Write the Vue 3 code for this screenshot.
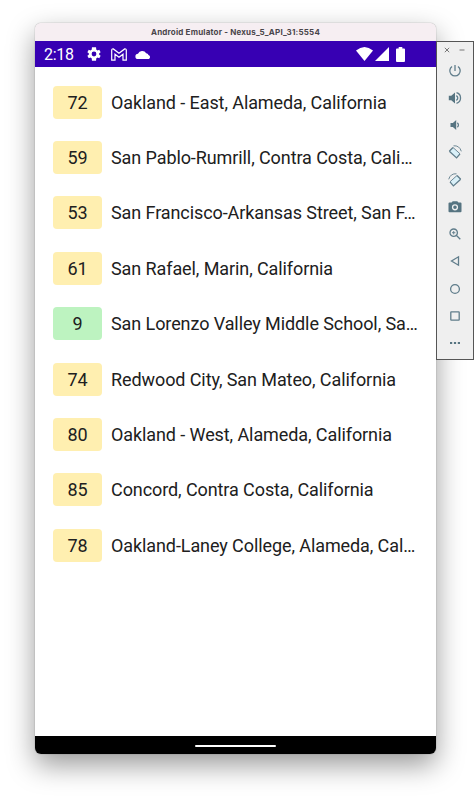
<template>
  <div class="desktop">
    <div class="window">
      <div class="title-bar">Android Emulator - Nexus_5_API_31:5554</div>

      <div class="status-bar">
        <span class="time">2:18</span>
        <svg class="gear" viewBox="2 2 20 20" fill="#fff">
          <path
            fill-rule="evenodd"
            d="M19.4 13a7.500 7.500 0 0 0 0-2l2.100-1.600-2-3.500-2.500 1a7.500 7.500 0 0 0-1.700-1L14.900 2.500H9.100l-.4 3.400a7.500 7.500 0 0 0-1.700 1l-2.500-1-2 3.500L4.600 11a7.500 7.500 0 0 0 0 2l-2.100 1.600 2 3.500 2.500-1a7.500 7.500 0 0 0 1.700 1l.4 3.400h5.800l.4-3.400a7.500 7.500 0 0 0 1.700-1l2.500 1 2-3.500zM12 15.400a3.400 3.400 0 1 1 0-6.800 3.400 3.400 0 0 1 0 6.800z"
          />
        </svg>
        <svg class="mail" viewBox="0 0 16 13" fill="none" stroke="#fff" stroke-width="1.200">
          <path d="M.7 2.200Q.7.700 2.300.9L8 5.200 13.700.9Q15.300.7 15.300 2.200V12.200H12V6.200L8 9.200 4 6.200V12.200H.7z" />
        </svg>
        <svg class="cloud" viewBox="0 0 16 9" fill="#fff">
          <path d="M3 9a2.600 2.600 0 0 1 0-5.200A4.600 4.600 0 0 1 11.200 3.200 3.200 3.200 0 0 1 13.500 5 2.100 2.100 0 0 1 13.700 9z" />
        </svg>
        <span class="spacer"></span>
        <svg class="wifi" viewBox="0 0 17 14" fill="#fff">
          <path d="M0 3.600Q8.500-3.400 17 3.600L8.500 14z" />
        </svg>
        <svg class="signal" viewBox="0 0 14 14" fill="#fff">
          <path d="M14 0V14H0z" />
        </svg>
        <svg class="battery" viewBox="0 0 9 15" fill="#fff">
          <path d="M2.700 0H6.300V1.500H8Q9 1.500 9 2.500V14Q9 15 8 15H1Q0 15 0 14V2.500Q0 1.500 1 1.500H2.700z" />
        </svg>
      </div>

      <div class="screen">
        <div v-for="item in stations" :key="item.name" class="row">
          <div class="badge" :class="{ good: item.aqi <= 50 }">{{ item.aqi }}</div>
          <div class="name">{{ item.name }}</div>
        </div>
      </div>

      <div class="nav-bar"><div class="handle"></div></div>
    </div>

    <div class="toolbar">
      <div class="controls">
        <svg viewBox="0 0 8 8"><path d="M1.800 1.800 6.200 6.200M6.200 1.800 1.800 6.200" /></svg>
        <svg viewBox="0 0 8 8"><path d="M1.500 4H6.500" /></svg>
      </div>
      <div v-for="tool in tools" :key="tool.id" class="tool">
        <svg viewBox="0 0 14 14">
          <path v-if="tool.tint" :d="tool.tint" class="tint" />
          <path v-if="tool.line" :d="tool.line" class="line" />
          <path v-if="tool.thin" :d="tool.thin" class="line thin" />
          <path v-if="tool.fill" :d="tool.fill" class="solid" fill-rule="evenodd" />
        </svg>
      </div>
    </div>
  </div>
</template>

<script setup>
const stations = [
  { aqi: 72, name: "Oakland - East, Alameda, California" },
  { aqi: 59, name: "San Pablo-Rumrill, Contra Costa, Cali…" },
  { aqi: 53, name: "San Francisco-Arkansas Street, San F…" },
  { aqi: 61, name: "San Rafael, Marin, California" },
  { aqi: 9, name: "San Lorenzo Valley Middle School, Sa…" },
  { aqi: 74, name: "Redwood City, San Mateo, California" },
  { aqi: 80, name: "Oakland - West, Alameda, California" },
  { aqi: 85, name: "Concord, Contra Costa, California" },
  { aqi: 78, name: "Oakland-Laney College, Alameda, Cal…" },
];

const tools = [
  { id: "power", line: "M7 1V7M4 2.500A5.200 5.200 0 1 0 10 2.500" },
  {
    id: "volume-up",
    tint: "M8 4.500A3 3 0 0 1 8 9.500z",
    line: "M8.500 1.700A5.500 5.500 0 0 1 8.500 12.300M8.300 4.600A2.700 2.700 0 0 1 8.300 9.400",
    fill: "M.8 4.800H3.300L7 1.500V12.500L3.300 9.200H.8z",
  },
  {
    id: "volume-down",
    line: "M9.300 4.900A2.500 2.500 0 0 1 9.300 9.100",
    fill: "M2.500 5.100H4.900L8.200 2V12L4.900 8.900H2.500z",
  },
  {
    id: "rotate-left",
    tint: "M5 2.500 12 8.800 8.600 12.900 1.300 6.300z",
    line: "M5 2.500 1.300 6.300M12 8.800 8.600 12.900 1.300 6.300",
    thin: "M5 2.500 12 8.800M5.500.8Q11.500.3 13.300 6.300",
  },
  {
    id: "rotate-right",
    tint: "M9 2.500 2 8.800 5.400 12.900 12.700 6.300z",
    line: "M9 2.500 12.700 6.300M2 8.800 5.400 12.900 12.700 6.300",
    thin: "M9 2.500 2 8.800M8.500.8Q2.500.3.7 6.300",
  },
  {
    id: "screenshot",
    fill: "M4.700 1.200H9.300L10.400 2.500H12.500Q13.500 2.500 13.500 3.500V11.300Q13.500 12.300 12.500 12.300H1.500Q.5 12.300.5 11.300V3.500Q.5 2.500 1.500 2.500H3.600zM7 4.200A3.100 3.100 0 1 0 7 10.400 3.100 3.100 0 1 0 7 4.200zM7 5.500A1.800 1.800 0 1 1 7 9.100 1.800 1.800 0 1 1 7 5.500z",
  },
  {
    id: "zoom",
    line: "M5.700 2A3.700 3.700 0 1 0 5.700 9.400 3.700 3.700 0 1 0 5.700 2zM8.500 8.500 12.300 12.300",
    thin: "M5.700 4V7.400M4 5.700H7.400",
  },
  { id: "back", line: "M10.500 2.800V11.200L3.500 7z" },
  { id: "home", line: "M7 2.600A4.400 4.400 0 1 0 7 11.400 4.400 4.400 0 1 0 7 2.600z" },
  { id: "overview", line: "M3.300 2.800H10.700Q11.200 2.800 11.200 3.300V10.700Q11.200 11.200 10.700 11.200H3.300Q2.800 11.200 2.800 10.700V3.300Q2.800 2.800 3.300 2.800z" },
  { id: "more", fill: "M2 5.900H4.200V8.100H2zM5.900 5.900H8.100V8.100H5.900zM9.800 5.900H12V8.100H9.800z" },
];
</script>

<style>
body {
  margin: 0;
  background: #fff;
}
</style>

<style scoped>
.desktop {
  display: flex;
  align-items: flex-start;
  box-sizing: border-box;
  width: 474px;
  height: 800px;
  padding: 23px 0 0 35px;
  overflow: hidden;
  font-family: Roboto, sans-serif;
}

.window {
  display: flex;
  flex-direction: column;
  flex-shrink: 0;
  width: 401px;
  height: 731px;
  border-radius: 6px;
  overflow: hidden;
  background: #fff;
  box-shadow: 0 0 1px rgba(0, 0, 0, 0.6), 0 11px 28px rgba(0, 0, 0, 0.4);
}

.title-bar {
  height: 18px;
  background: #f6eef2;
  color: #49454a;
  font: bold 8px/18px Inter, sans-serif;
  letter-spacing: 0.19px;
  text-align: center;
}

.status-bar {
  display: flex;
  align-items: center;
  box-sizing: border-box;
  height: 26px;
  padding: 0 31px 0 9px;
  margin-bottom: 1px;
  background: #3700b3;
}
.time {
  width: 43px;
  color: #fff;
  font-size: 16px;
  line-height: 26px;
  letter-spacing: -0.25px;
  position: relative;
  top: 1px;
}
.gear {
  width: 14px;
  height: 14px;
}
.mail {
  width: 16px;
  height: 13px;
  margin-left: 10px;
}
.cloud {
  width: 16px;
  height: 9px;
  margin-left: 8px;
}
.spacer {
  flex: 1;
}
.wifi {
  width: 17px;
  height: 14px;
}
.signal {
  width: 14px;
  height: 14px;
  margin-left: 2px;
}
.battery {
  width: 9px;
  height: 15px;
  margin-left: 7px;
}

.screen {
  flex: 1;
  display: flex;
  flex-direction: column;
  gap: 22.400px;
  padding: 17.700px 16px 0 18px;
}
.row {
  display: flex;
  align-items: center;
  gap: 9px;
  height: 33px;
  color: #202020;
  font-size: 18px;
  letter-spacing: -0.09px;
  white-space: nowrap;
}
.badge {
  flex-shrink: 0;
  width: 49px;
  border-radius: 4px;
  background: #ffefb0;
  line-height: 33px;
  text-align: center;
}
.badge.good {
  background: #bdf3c0;
}

.nav-bar {
  display: flex;
  justify-content: center;
  align-items: center;
  height: 18px;
  background: #000;
}
.handle {
  width: 81px;
  height: 2px;
  margin-top: 2px;
  border-radius: 1px;
  background: #fff;
}

.toolbar {
  z-index: 1;
  box-sizing: border-box;
  width: 60px;
  height: 319px;
  margin-top: 18px;
  border: 1px solid #555;
  background: #efefef;
}
.controls {
  display: flex;
  gap: 7px;
  height: 15px;
  padding: 4px 0 0 6px;
  box-sizing: border-box;
}
.controls svg {
  width: 8px;
  height: 8px;
  fill: none;
  stroke: #777;
}
.tool {
  display: flex;
  align-items: center;
  width: 36px;
  height: 27.250px;
  justify-content: center;
}
.tool svg {
  width: 14px;
  height: 14px;
}
.line {
  fill: none;
  stroke: #607d8b;
  stroke-width: 1.300;
}
.thin {
  stroke-width: 0.900;
}
.solid {
  fill: #567481;
}
.tint {
  fill: #d9f0f8;
}
</style>
